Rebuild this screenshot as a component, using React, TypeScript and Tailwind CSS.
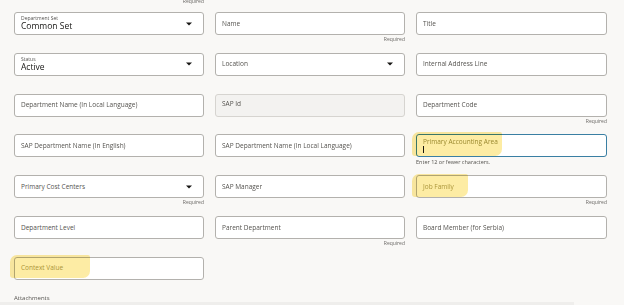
import React from 'react'

type Field = {
  label: string
  value?: string
  select?: boolean
  required?: boolean
  disabled?: boolean
  focused?: boolean
  hint?: string
  mark?: string
}

const ROWS: (Field | null)[][] = [
  [{ label: 'Department Set', value: 'Common Set', select: true }, { label: 'Name', required: true }, { label: 'Title' }],
  [{ label: 'Status', value: 'Active', select: true }, { label: 'Location', select: true }, { label: 'Internal Address Line' }],
  [{ label: 'Department Name (In Local Language)' }, { label: 'SAP Id', disabled: true }, { label: 'Department Code', required: true }],
  [{ label: 'SAP Department Name (In English)' }, { label: 'SAP Department Name (In Local Language)' }, { label: 'Primary Accounting Area', focused: true, hint: 'Enter 12 or fewer characters.', mark: 'w-[90px] h-[24px] -top-[2px]' }],
  [{ label: 'Primary Cost Centers', select: true, required: true }, { label: 'SAP Manager' }, { label: 'Job Family', required: true, mark: 'w-[56px] h-[23px] -top-[1px]' }],
  [{ label: 'Department Level' }, { label: 'Parent Department', required: true }, { label: 'Board Member (for Serbia)' }],
  [{ label: 'Context Value', mark: 'w-[80px] h-[23px] -top-[2px]' }, null, null],
]

function Caret() {
  return (
    <svg width="6" height="4" viewBox="0 0 6 4" className="shrink-0">
      <path d="M0 0.5h6L3 3.5z" fill="#161513" />
    </svg>
  )
}

function Cell({ f }: { f: Field }) {
  const box = f.disabled
    ? 'bg-[#f3f2f0] border-[#d6d4d0]'
    : f.focused
    ? 'bg-white border-[#3a7fa3]'
    : 'bg-white border-[#b3b1ad]'
  return (
    <div className="relative">
      <div className={`h-[23px] rounded-[3px] border ${box} flex items-center pl-[6px] pr-[11px]`}>
        {f.value ? (
          <div className="flex-1 flex flex-col leading-none">
            <span className="text-[5px] text-[#54524f]">{f.label}</span>
            <span className="text-[8.5px] text-[#161513] mt-[1px]">{f.value}</span>
          </div>
        ) : f.disabled ? (
          <span className="flex-1 self-start pt-[4px] text-[6.5px] text-[#55534f]">{f.label}</span>
        ) : f.focused ? (
          <div className="flex-1 flex flex-col leading-none">
            <span className="text-[6.5px] text-[#9c9447]">{f.label}</span>
            <span className="w-[1px] h-[7px] bg-[#161513] mt-[1px]" />
          </div>
        ) : (
          <span className={`flex-1 text-[6.5px] ${f.mark ? 'text-[#aea35a]' : 'text-[#55534f]'}`}>{f.label}</span>
        )}
        {f.select && <Caret />}
      </div>
      {f.required && <div className="text-right text-[5px] leading-none mt-[2px] text-[#6b6966]">Required</div>}
      {f.hint && <div className="text-[5.5px] leading-none mt-[3px] text-[#55534f]">{f.hint}</div>}
      {f.mark && (
        <div className={`absolute -left-[4px] ${f.mark} bg-[#fde47c] opacity-70 mix-blend-multiply rounded-[7px] rounded-tr-[2px] rounded-bl-[3px]`} />
      )}
    </div>
  )
}

export default function App() {
  return (
    <div className="w-[624px] h-[305px] overflow-hidden bg-[#f9f8f6] relative" style={{ fontFamily: '"Open Sans", "Noto Sans", sans-serif' }}>
      <div className="pl-[14px] pr-[17px]">
        <div className="grid grid-cols-[190px_190px_191px] gap-x-[11px] h-[12px]">
          <div className="text-right text-[5px] leading-none -mt-[1px] text-[#6b6966]">Required</div>
        </div>
        <div className="grid grid-cols-[190px_190px_191px] gap-x-[11px] auto-rows-[40.8px]">
          {ROWS.flat().map((f, i) => (f ? <Cell key={i} f={f} /> : <div key={i} />))}
        </div>
        <div className="text-[6px] text-[#55534f] -mt-[3px] leading-none">Attachments</div>
      </div>
      <div className="absolute left-0 right-[50px] bottom-0 h-[3px] bg-[#efeeec]" />
    </div>
  )
}
